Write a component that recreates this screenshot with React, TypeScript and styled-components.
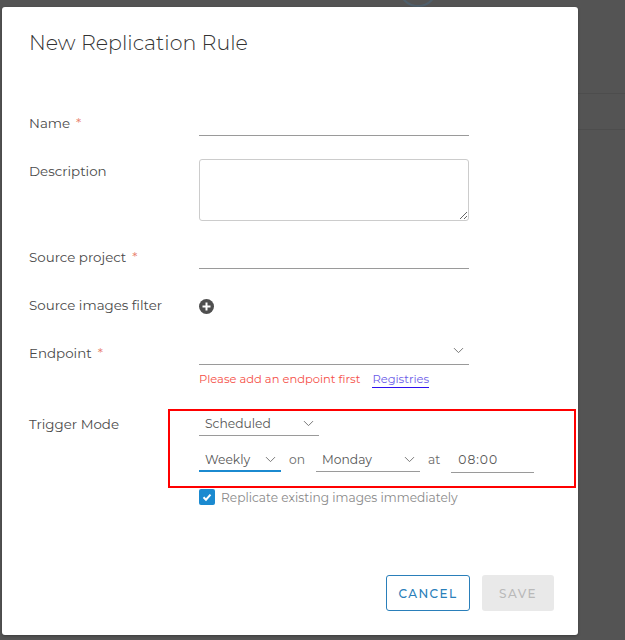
import styled, { createGlobalStyle } from "styled-components";
import { ChevronDown } from "lucide-react";

const GlobalStyle = createGlobalStyle`
  html, body {
    margin: 0;
    padding: 0;
    background: #545454;
  }
  body {
    font-family: "Montserrat", "Inter", "Noto Sans", sans-serif;
  }
`;

const Backdrop = styled.div`
  position: relative;
  width: 625px;
  height: 640px;
  overflow: hidden;
  padding: 7px 0 0 2px;
  box-sizing: border-box;
  background: #545454;
`;

const BgLine = styled.div<{ $top: number }>`
  position: absolute;
  left: 578px;
  right: 0;
  top: ${(p) => p.$top}px;
  height: 1px;
  background: #4d4d4d;
`;

const BgLogo = styled.div`
  position: absolute;
  left: 398px;
  top: -33px;
  width: 40px;
  height: 40px;
  box-sizing: border-box;
  border: 2px solid #4f5f6b;
  border-radius: 50%;
`;

const Modal = styled.div`
  position: relative;
  width: 576px;
  height: 628px;
  box-sizing: border-box;
  padding: 22px 24px 0 27px;
  background: #fff;
  border-radius: 3px;
  box-shadow: 0 1px 3px rgba(0, 0, 0, 0.3);
  display: flex;
  flex-direction: column;
`;

const Title = styled.h3`
  margin: 0 0 50px;
  font-size: 20.6px;
  line-height: 28px;
  font-weight: 300;
  color: #333;
`;

const Form = styled.div`
  display: flex;
  flex-direction: column;
  flex: 1;
`;

const Row = styled.div<{ $height: number }>`
  display: flex;
  height: ${(p) => p.$height}px;
`;

const Label = styled.label<{ $top: number }>`
  width: 170px;
  flex: none;
  box-sizing: border-box;
  padding-top: ${(p) => p.$top}px;
  font-size: 13.4px;
  line-height: 20px;
  color: #4a4a4a;
`;

const Star = styled.span`
  color: #e8806c;
  margin-left: 6px;
`;

const Field = styled.div`
  display: flex;
  flex-direction: column;
`;

const LineInput = styled.div<{ $width: number }>`
  width: ${(p) => p.$width}px;
  height: 28px;
  border-bottom: 1px solid #9a9a9a;
`;

const TextArea = styled.textarea`
  width: 270px;
  height: 62px;
  box-sizing: border-box;
  border: 1px solid #ccc;
  border-radius: 3px;
  background: #fff;
  margin: 0;
  outline: none;
`;

const AddIcon = styled.svg`
  width: 15px;
  height: 15px;
  margin-top: 11px;
`;

const SelectBox = styled.div<{ $width: number; $height?: number; $active?: boolean }>`
  width: ${(p) => p.$width}px;
  height: ${(p) => p.$height ?? 24}px;
  box-sizing: border-box;
  padding: 0 2px 0 6px;
  display: flex;
  align-items: center;
  justify-content: space-between;
  font-size: 12.3px;
  color: #565656;
  border-bottom: ${(p) => (p.$active ? "2px solid #1b8ad0" : "1px solid #9a9a9a")};
`;

const Chevron = styled(ChevronDown)`
  width: 17px;
  height: 17px;
  color: #777;
  stroke-width: 1.4;
  flex: none;
`;

const ErrorRow = styled.div`
  display: flex;
  align-items: baseline;
  gap: 12px;
  margin-top: 7px;
  font-size: 11.5px;
  line-height: 15px;
`;

const ErrorText = styled.span`
  color: #f54f47;
`;

const RegistryLink = styled.a`
  color: #6a5ae8;
  border-bottom: 1px solid #3010f0;
`;

const Schedule = styled.div`
  display: flex;
  align-items: flex-start;
  margin-top: 12px;
`;

const Word = styled.span<{ $left: number; $right: number }>`
  margin: 0 ${(p) => p.$right}px 0 ${(p) => p.$left}px;
  font-size: 12.3px;
  line-height: 24px;
  color: #6a6a6a;
`;

const TimeBox = styled.div`
  width: 83px;
  height: 25px;
  box-sizing: border-box;
  padding-left: 7px;
  font-size: 12.3px;
  line-height: 24px;
  letter-spacing: 1px;
  color: #565656;
  border-bottom: 1px solid #9a9a9a;
`;

const CheckRow = styled.div`
  display: flex;
  align-items: center;
  gap: 6px;
  margin-top: 16px;
  font-size: 12.2px;
  color: #8a8a8a;
`;

const CheckBox = styled.span`
  width: 16px;
  height: 16px;
  border-radius: 2px;
  background: #1b8ad0;
  display: flex;
  align-items: center;
  justify-content: center;
`;

const Footer = styled.div`
  position: absolute;
  right: 24px;
  bottom: 24px;
  display: flex;
  gap: 12px;
`;

const Button = styled.button<{ $disabled?: boolean }>`
  height: 36px;
  padding: 0;
  width: ${(p) => (p.$disabled ? 72 : 84)}px;
  border-radius: 3px;
  font-family: inherit;
  font-size: 12px;
  font-weight: 500;
  letter-spacing: 1.4px;
  background: ${(p) => (p.$disabled ? "#e9e9e9" : "#fff")};
  color: ${(p) => (p.$disabled ? "#b9b9b9" : "#2a7fba")};
  border: ${(p) => (p.$disabled ? "none" : "1px solid #2a7fba")};
`;

const Highlight = styled.div`
  position: absolute;
  left: 166px;
  top: 402px;
  width: 408px;
  height: 79px;
  box-sizing: border-box;
  border: 2px solid #f00;
  pointer-events: none;
`;

export default function App() {
  return (
    <>
      <GlobalStyle />
      <Backdrop>
        <BgLogo />
        <BgLine $top={93} />
        <BgLine $top={129} />
        <Modal>
          <Title>New Replication Rule</Title>
          <Form>
            <Row $height={52}>
              <Label $top={6}>
                Name<Star>*</Star>
              </Label>
              <LineInput $width={270} />
            </Row>
            <Row $height={81}>
              <Label $top={2}>Description</Label>
              <TextArea />
            </Row>
            <Row $height={48}>
              <Label $top={7}>
                Source project<Star>*</Star>
              </Label>
              <LineInput $width={270} />
            </Row>
            <Row $height={48}>
              <Label $top={7}>Source images filter</Label>
              <AddIcon viewBox="0 0 15 15">
                <circle cx="7.5" cy="7.5" r="7.5" fill="#4f4f4f" />
                <path d="M7.5 3.5v8M3.5 7.5h8" stroke="#fff" strokeWidth="2" />
              </AddIcon>
            </Row>
            <Row $height={76}>
              <Label $top={7}>
                Endpoint<Star>*</Star>
              </Label>
              <Field>
                <SelectBox $width={270} $height={29}>
                  <span />
                  <Chevron />
                </SelectBox>
                <ErrorRow>
                  <ErrorText>Please add an endpoint first</ErrorText>
                  <RegistryLink>Registries</RegistryLink>
                </ErrorRow>
              </Field>
            </Row>
            <Row $height={100}>
              <Label $top={2}>Trigger Mode</Label>
              <Field>
                <SelectBox $width={120}>
                  Scheduled
                  <Chevron />
                </SelectBox>
                <Schedule>
                  <SelectBox $width={82} $active>
                    Weekly
                    <Chevron />
                  </SelectBox>
                  <Word $left={8} $right={11}>on</Word>
                  <SelectBox $width={104}>
                    Monday
                    <Chevron />
                  </SelectBox>
                  <Word $left={8} $right={11}>at</Word>
                  <TimeBox>08:00</TimeBox>
                </Schedule>
                <CheckRow>
                  <CheckBox>
                    <svg width="12" height="12" viewBox="0 0 12 12">
                      <path d="M2.5 6.2l2.5 2.5 4.5-5" fill="none" stroke="#fff" strokeWidth="2" />
                    </svg>
                  </CheckBox>
                  Replicate existing images immediately
                </CheckRow>
              </Field>
            </Row>
          </Form>
          <Footer>
            <Button>CANCEL</Button>
            <Button $disabled>SAVE</Button>
          </Footer>
          <Highlight />
        </Modal>
      </Backdrop>
    </>
  );
}
